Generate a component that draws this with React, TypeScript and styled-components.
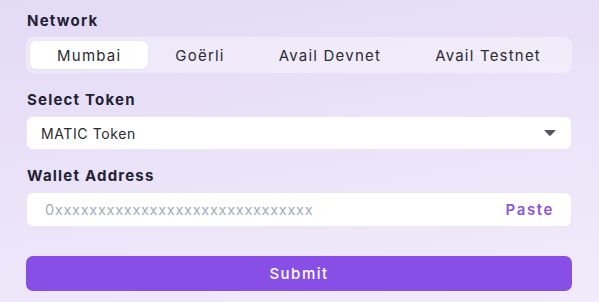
import React from 'react';
import styled, { createGlobalStyle } from 'styled-components';

const GlobalStyle = createGlobalStyle`
  html, body {
    margin: 0;
    padding: 0;
  }
  body {
    font-family: Inter, "Noto Sans", sans-serif;
    color: #1e2230;
  }
`;

const Page = styled.div`
  width: 599px;
  height: 302px;
  box-sizing: border-box;
  padding: 12px 27px 0 26px;
  background: linear-gradient(170deg, #e3daf6 0%, #ebe3f8 50%, #f1ebfb 100%);
  display: flex;
  flex-direction: column;
  overflow: hidden;
`;

const Field = styled.div<{ gap?: number }>`
  display: flex;
  flex-direction: column;
  margin-bottom: ${p => p.gap ?? 0}px;
`;

const Label = styled.div`
  font-size: 15px;
  font-weight: 700;
  letter-spacing: 1.2px;
  color: #1f2333;
  line-height: 17px;
  margin: 0 0 8px 1px;
`;

const Tabs = styled.div`
  display: flex;
  height: 36px;
  box-sizing: border-box;
  padding: 4px;
  border-radius: 8px;
  background: rgba(255, 255, 255, 0.38);
`;

const Tab = styled.div<{ active?: boolean }>`
  flex: 1 1 auto;
  display: flex;
  align-items: center;
  justify-content: center;
  border-radius: 6px;
  font-size: 15px;
  letter-spacing: 1.2px;
  color: #2b2b30;
  background: ${p => (p.active ? '#ffffff' : 'transparent')};
  box-shadow: ${p => (p.active ? '0 1px 2px rgba(80, 60, 130, 0.08)' : 'none')};
`;

const Box = styled.div<{ h: number }>`
  height: ${p => p.h}px;
  box-sizing: border-box;
  display: flex;
  align-items: center;
  justify-content: space-between;
  background: #ffffff;
  border: 1px solid #ebe6f3;
  border-radius: 7px;
`;

const SelectText = styled.span`
  font-size: 14px;
  letter-spacing: 0.6px;
  color: #2a2a30;
  padding-left: 14px;
`;

const Caret = styled.svg`
  margin-right: 15px;
`;

const Placeholder = styled.span`
  font-size: 14.5px;
  letter-spacing: 0.7px;
  color: #a5acbb;
  padding-left: 18px;
`;

const PasteButton = styled.span`
  font-size: 15px;
  font-weight: 600;
  letter-spacing: 1.6px;
  color: #8b55e3;
  padding-right: 17px;
`;

const Submit = styled.button`
  height: 35px;
  border: none;
  border-radius: 7px;
  background: #874fe5;
  color: #ffffff;
  font-family: Inter, "Noto Sans", sans-serif;
  font-size: 15px;
  font-weight: 500;
  letter-spacing: 1.5px;
  margin-top: 29px;
`;

const networks = ['Mumbai', 'Goërli', 'Avail Devnet', 'Avail Testnet'];

export default function App() {
  return (
    <>
      <GlobalStyle />
      <Page>
        <Field gap={18}>
          <Label>Network</Label>
          <Tabs>
            {networks.map((n, i) => (
              <Tab key={n} active={i === 0}>
                {n}
              </Tab>
            ))}
          </Tabs>
        </Field>
        <Field gap={17}>
          <Label>Select Token</Label>
          <Box h={34}>
            <SelectText>MATIC Token</SelectText>
            <Caret width="12" height="6" viewBox="0 0 12 6">
              <path d="M0 0 H12 L6.8 5.4 Q6 6 5.2 5.4 Z" fill="#55565e" />
            </Caret>
          </Box>
        </Field>
        <Field>
          <Label>Wallet Address</Label>
          <Box h={35}>
            <Placeholder>0xxxxxxxxxxxxxxxxxxxxxxxxxxxxxx</Placeholder>
            <PasteButton>Paste</PasteButton>
          </Box>
        </Field>
        <Submit>Submit</Submit>
      </Page>
    </>
  );
}
